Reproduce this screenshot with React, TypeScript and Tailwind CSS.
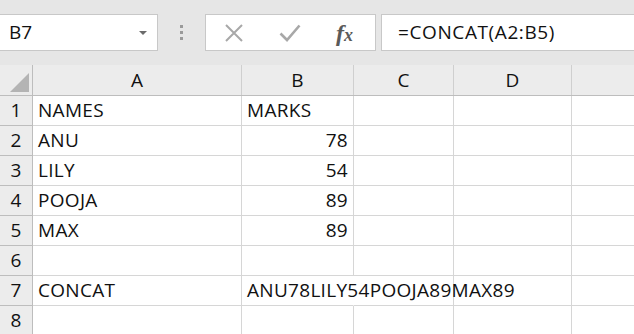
import React from 'react'

const cols = [
  { name: 'A', w: 'w-[209px]' },
  { name: 'B', w: 'w-[112px]' },
  { name: 'C', w: 'w-[100px]' },
  { name: 'D', w: 'w-[118px]' },
]

const rows: [string, string, boolean][] = [
  ['NAMES', 'MARKS', false],
  ['ANU', '78', true],
  ['LILY', '54', true],
  ['POOJA', '89', true],
  ['MAX', '89', true],
  ['', '', false],
  ['CONCAT', 'ANU78LILY54POOJA89MAX89', false],
  ['', '', false],
]

export default function App() {
  return (
    <div className="w-[634px] h-[334px] overflow-hidden bg-white text-[#111] font-['Open_Sans',sans-serif]">
      <FormulaBar />
      <div className="flex h-[31px] bg-[#ececec] border-b border-[#bdbdbd]">
        <div className="w-[33px] shrink-0 border-r border-[#bdbdbd] flex items-end justify-end pr-[3px] pb-[3px]">
          <div className="w-0 h-0 border-l-[19px] border-l-transparent border-b-[19px] border-b-[#b4b4b4]" />
        </div>
        {cols.map(c => (
          <div key={c.name} className={`${c.w} shrink-0 border-r border-[#cfcfcf] flex items-center justify-center text-[19px]`}>
            {c.name}
          </div>
        ))}
        <div className="flex-1" />
      </div>
      {rows.map(([a, b, num], i) => (
        <div key={i} className="flex h-[30px] text-[19px] tracking-[0.3px]">
          <div className="w-[33px] shrink-0 bg-[#ececec] border-r border-b border-[#bdbdbd] flex items-center justify-center">
            {i + 1}
          </div>
          <div className="w-[209px] shrink-0 border-r border-b border-[#d6d6d6] flex items-center px-[5px]">{a}</div>
          <div className={`w-[112px] shrink-0 border-r border-b border-[#d6d6d6] flex items-center px-[5px] whitespace-nowrap ${num ? 'justify-end' : 'overflow-visible'} ${i === 6 ? 'relative z-10 bg-white border-r-transparent' : ''}`}>
            {b}
          </div>
          <div className="w-[100px] shrink-0 border-r border-b border-[#d6d6d6]" />
          <div className="w-[118px] shrink-0 border-r border-b border-[#d6d6d6]" />
          <div className="flex-1 border-b border-[#d6d6d6]" />
        </div>
      ))}
    </div>
  )
}

function FormulaBar() {
  return (
    <div className="h-[65px] bg-[#e6e6e6] flex items-start pt-[14px]">
      <div className="w-[158px] h-[37px] bg-white border border-l-0 border-[#c8c8c8] flex items-center justify-between pl-[9px] pr-[10px] text-[19px]">
        <span>B7</span>
        <div className="w-0 h-0 border-l-[4px] border-r-[4px] border-t-[4px] border-l-transparent border-r-transparent border-t-[#6b6b6b]" />
      </div>
      <div className="w-[47px] h-[37px] flex flex-col items-center justify-center gap-[3px]">
        <div className="w-[3px] h-[3px] bg-[#9a9a9a]" />
        <div className="w-[3px] h-[3px] bg-[#9a9a9a]" />
        <div className="w-[3px] h-[3px] bg-[#9a9a9a]" />
      </div>
      <div className="w-[171px] h-[37px] bg-white border border-[#c8c8c8] flex items-center">
        <div className="w-[56px] flex justify-center">
          <svg width="20" height="20" viewBox="0 0 20 20" stroke="#a8a8a8" strokeWidth="2" fill="none">
            <path d="M2 2L18 18M18 2L2 18" />
          </svg>
        </div>
        <div className="w-[56px] flex justify-center">
          <svg width="22" height="18" viewBox="0 0 22 18" stroke="#a8a8a8" strokeWidth="2.6" fill="none">
            <path d="M1.5 9.5L8 16L20.5 1.5" />
          </svg>
        </div>
        <div className="flex-1 flex justify-center pr-[4px] font-['Liberation_Serif',serif] italic font-bold text-[24px] text-[#5a5a5a] leading-none">
          <span>f</span><span className="text-[18px] mt-[5px]">x</span>
        </div>
      </div>
      <div className="flex-1 ml-[5px] h-[37px] bg-white border border-r-0 border-[#c8c8c8] flex items-center pl-[16px] text-[19px] tracking-[0.6px]">
        =CONCAT(A2:B5)
      </div>
    </div>
  )
}
